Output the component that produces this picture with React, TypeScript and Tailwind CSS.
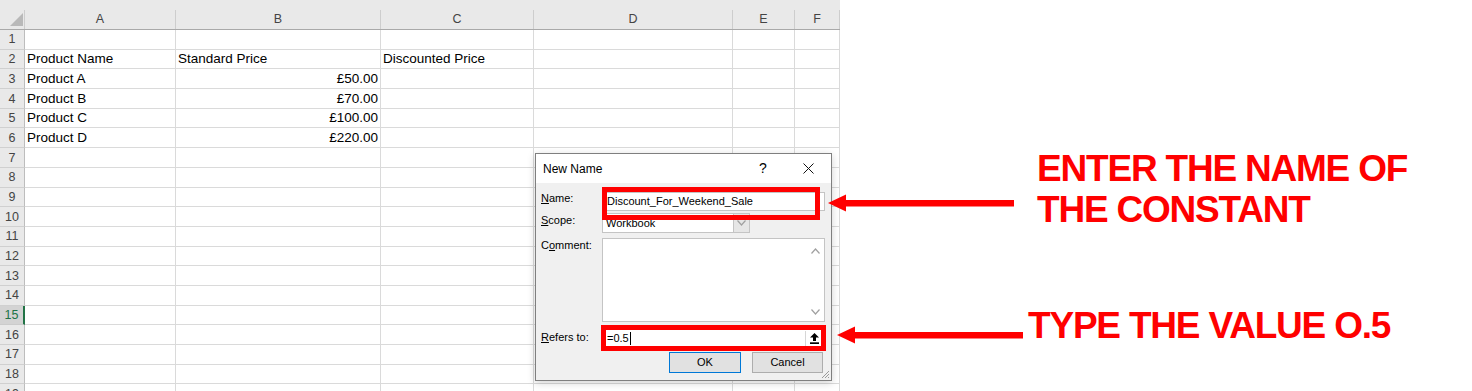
import React from 'react';

type Col = { key: string; w: string; align?: 'right' };

const cols: Col[] = [
  { key: 'A', w: 'w-[151px]' },
  { key: 'B', w: 'w-[205px]', align: 'right' },
  { key: 'C', w: 'w-[153px]' },
  { key: 'D', w: 'w-[199px]' },
  { key: 'E', w: 'w-[62px]' },
  { key: 'F', w: 'w-[45px]' },
];

const data: Record<number, string[]> = {
  2: ['Product Name', 'Standard Price', 'Discounted Price'],
  3: ['Product A', '£50.00'],
  4: ['Product B', '£70.00'],
  5: ['Product C', '£100.00'],
  6: ['Product D', '£220.00'],
};

const rows = Array.from({ length: 19 }, (_, i) => i + 1);

const Sheet = () => (
  <div className="w-[840px]">
    <div className="h-[10px] bg-[#e9e9e9]" />
    {/* column headers */}
    <div className="flex h-[20px] bg-[#e9e9e9] border-b border-[#a9a9a9]">
      <div className="w-[25px] relative border-r border-[#cdcdcd]">
        <svg className="absolute left-[10px] top-[3px]" width="13" height="13" viewBox="0 0 13 13">
          <polygon points="13,0 13,13 0,13" fill="#b9b9b9" />
        </svg>
      </div>
      {cols.map((c) => (
        <div
          key={c.key}
          className={`${c.w} border-r border-[#cdcdcd] flex items-center justify-center text-[12.5px] text-[#444]`}
        >
          {c.key}
        </div>
      ))}
    </div>
    {rows.map((r) => {
      const active = r === 15;
      return (
        <div key={r} className="flex h-[19.7px]">
          <div
            className={
              active
                ? 'w-[25px] bg-[#d3d3d3] border-b border-[#cbcbcb] border-r-2 border-r-[#217346] flex items-center justify-center pt-[1px] text-[12.5px] text-[#217346]'
                : 'w-[25px] bg-[#e9e9e9] border-b border-[#d0d0d0] border-r border-r-[#bdbdbd] flex items-center justify-center pt-[1px] text-[12.5px] text-[#444]'
            }
          >
            {r}
          </div>
          {cols.map((c, i) => (
            <div
              key={c.key}
              className={`${c.w} border-r border-b border-[#dadada] flex items-center pt-[1px] text-[13.5px] text-black whitespace-nowrap overflow-hidden ${
                c.align === 'right' && r > 2 ? 'justify-end pr-[2px]' : 'pl-[2px]'
              }`}
            >
              {data[r]?.[i] ?? ''}
            </div>
          ))}
        </div>
      );
    })}
  </div>
);

const Chevron = ({ up }: { up?: boolean }) => (
  <svg width="9" height="6" viewBox="0 0 9 6">
    <polyline
      points={up ? '0.5,5.5 4.5,1 8.5,5.5' : '0.5,0.5 4.5,5 8.5,0.5'}
      fill="none"
      stroke="#a0a0a0"
      strokeWidth="1.2"
    />
  </svg>
);

const Dialog = () => (
  <div className="absolute left-[535px] top-[153px] w-[297px] h-[228px] border border-[#7f7f7f] bg-[#f0f0f0] flex flex-col shadow-[0_2px_8px_rgba(0,0,0,0.18)]">
    <div className="h-[29px] bg-white flex items-center pl-[7px] pr-[8px] text-[12px] text-black">
      <div className="flex-1">New Name</div>
      <div className="w-[30px] text-center text-[14px]">?</div>
      <div className="w-[30px] ml-[15px] flex justify-center">
        <svg width="11" height="11" viewBox="0 0 11 11">
          <path d="M0.5 0.5 L10.5 10.5 M10.5 0.5 L0.5 10.5" stroke="#111" strokeWidth="1" />
        </svg>
      </div>
    </div>

    <div className="flex-1 relative pl-[5px] pr-[6px] pt-[9px] text-[11px] text-black">
      <div className="flex h-[19px]">
        <div className="w-[61px] leading-[12px]">
          <span className="underline underline-offset-1">N</span>ame:
        </div>
        <div className="flex-1 bg-white border border-[#c4c4c4] flex items-center pl-[4px] whitespace-nowrap">
          Discount_For_Weekend_Sale
        </div>
      </div>

      <div className="flex h-[20px] mt-[2px]">
        <div className="w-[61px] leading-[12px] pt-[1px]">
          <span className="underline underline-offset-1">S</span>cope:
        </div>
        <div className="w-[148px] bg-white border border-[#c4c4c4] flex items-center">
          <div className="flex-1 pl-[3px] pt-[1px]">Workbook</div>
          <div className="w-[16px] h-full bg-[#e6e6e6] border-l border-[#c4c4c4] flex items-center justify-center">
            <Chevron />
          </div>
        </div>
      </div>

      <div className="flex h-[84px] mt-[5px]">
        <div className="w-[61px] leading-[12px] pt-[1px]">
          C<span className="underline underline-offset-1">o</span>mment:
        </div>
        <div className="flex-1 bg-white border border-[#c4c4c4] flex justify-end">
          <div className="w-[17px] flex flex-col items-center justify-between pt-[9px] pb-[6px]">
            <Chevron up />
            <Chevron />
          </div>
        </div>
      </div>

      <div className="flex h-[19px] mt-[7px]">
        <div className="w-[61px] leading-[12px] pt-[2px]">
          <span className="underline underline-offset-1">R</span>efers to:
        </div>
        <div className="flex-1 bg-white border border-[#c4c4c4] flex items-center">
          <div className="flex-1 pl-[4px] flex items-center">
            =0.5
            <span className="inline-block w-[1px] h-[13px] bg-black ml-[1px]" />
          </div>
          <div className="w-[17px] h-[15px] mr-[2px] bg-white border-l border-[#d6d6d6] flex items-center justify-center">
            <svg width="9" height="11" viewBox="0 0 9 11">
              <path d="M4.5 0 L9 4.5 H6 V8 H3 V4.5 H0 Z" fill="#000" />
              <rect x="0" y="9.3" width="9" height="1.7" fill="#000" />
            </svg>
          </div>
        </div>
      </div>

      <div className="flex h-[21px] mt-[4px] justify-end gap-[11px] mr-[2px]">
        <div className="w-[72px] bg-[#e1e1e1] border border-[#0078d7] flex items-center justify-center">OK</div>
        <div className="w-[71px] bg-[#e1e1e1] border border-[#adadad] flex items-center justify-center">
          Cancel
        </div>
      </div>

      <svg className="absolute right-[1px] bottom-[1px]" width="10" height="10" viewBox="0 0 10 10">
        <path d="M9 2 L2 9 M9 5 L5 9 M9 8 L8 9" stroke="#9a9a9a" strokeWidth="1" />
      </svg>
    </div>
  </div>
);

const Arrow = ({ className }: { className: string }) => (
  <svg className={className} width="186" height="18" viewBox="0 0 186 18">
    <polygon points="0,9 18,0.5 18,17.5" fill="#ff0000" />
    <rect x="17" y="6" width="169" height="6.5" fill="#ff0000" />
  </svg>
);

export default function App() {
  return (
    <div className="relative w-[1472px] h-[391px] overflow-hidden bg-white font-['Liberation_Sans',Arial,sans-serif]">
      <Sheet />
      <Dialog />

      {/* annotation boxes */}
      <div className="absolute left-[602px] top-[187px] w-[218px] h-[33px] border-[5px] border-[#ff0000]" />
      <div className="absolute left-[601px] top-[325px] w-[225px] h-[26px] border-[5px] border-[#ff0000]" />

      <Arrow className="absolute left-[828px] top-[194px]" />
      <Arrow className="absolute left-[837px] top-[326px]" />

      <div className="absolute left-[1037px] top-[148px] text-[37px] leading-[41px] font-bold tracking-[-1.2px] text-[#ff0000] whitespace-nowrap">
        ENTER THE NAME OF
        <br />
        THE CONSTANT
      </div>
      <div className="absolute left-[1028px] top-[305px] text-[37px] leading-[41px] font-bold tracking-[-1.2px] text-[#ff0000] whitespace-nowrap">
        TYPE THE VALUE O.5
      </div>
    </div>
  );
}
